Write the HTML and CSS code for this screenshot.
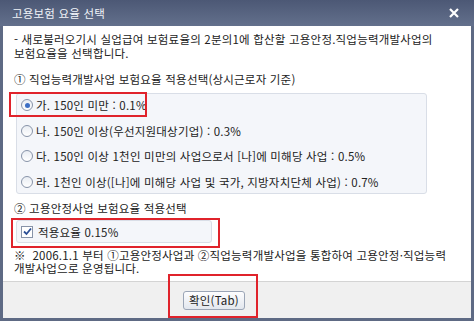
FILE: index.html
```html
<!DOCTYPE html>
<html lang="ko">
<head>
  <meta charset="UTF-8" />
  <title>고용보험 요율 선택</title>
  <link rel="stylesheet" href="styles.css">
</head>
<body>
  <div class="window">
    <div class="titlebar">
      <span class="title">고용보험 요율 선택</span>
      <svg class="close" width="10" height="10" viewBox="0 0 10 10"><path d="M1 1 L9 9 M9 1 L1 9" stroke="#fff" stroke-width="2.2"/></svg>
    </div>

    <div class="content">
      <p class="desc">- 새로불러오기시 실업급여 보험료율의 2분의1에 합산할 고용안정.직업능력개발사업의<br>보험요율을 선택합니다.</p>

      <p class="section-title">① 직업능력개발사업 보험요율 적용선택(상시근로자 기준)</p>
      <div class="group">
        <span class="mark mark-radio"></span>
        <label class="row"><span class="radio checked"></span>가. 150인 미만 : 0.1%</label>
        <label class="row"><span class="radio"></span>나. 150인 이상(우선지원대상기업) : 0.3%</label>
        <label class="row"><span class="radio"></span>다. 150인 이상 1천인 미만의 사업으로서 [나]에 미해당 사업 : 0.5%</label>
        <label class="row"><span class="radio"></span>라. 1천인 이상([나]에 미해당 사업 및 국가, 지방자치단체 사업) : 0.7%</label>
      </div>

      <p class="section-title second">② 고용안정사업 보험요율 적용선택</p>
      <div class="check-box">
        <span class="mark mark-check"></span>
        <span class="check">
          <svg width="9" height="9" viewBox="0 0 9 9"><path d="M1 4.5 L3.5 7 L8 1.5" fill="none" stroke="#2c4f95" stroke-width="1.8"/></svg>
        </span>
        적용요율 0.15%
      </div>

      <p class="note">※ &nbsp;2006.1.1 부터 ①고용안정사업과 ②직업능력개발사업을 통합하여 고용안정·직업능력<br>개발사업으로 운영됩니다.</p>
    </div>

    <div class="footer">
      <span class="mark mark-button"></span>
      <button class="ok-btn">확인(Tab)</button>
    </div>
  </div>
</body>
</html>
```

FILE: styles.css
```css
body { margin: 0; font-family: "Noto Sans CJK KR", "Noto Sans", sans-serif; font-size: 11.5px; letter-spacing: 0.2px; color: #222; }
p { margin: 0; }
.window { box-sizing: border-box; width: 474px; height: 321px; background: #5e6a84; padding: 0 3px 3px; display: flex; flex-direction: column; }
.titlebar { height: 26px; display: flex; align-items: center; justify-content: space-between; padding: 0 15px 0 12px; margin: 0 -3px; background: linear-gradient(#4c5875, #63708c); color: #f0f3f8; }
.close { display: block; }
.content { flex: 1; background: #fff; padding: 6px 0 0 11px; }
.desc { line-height: 14px; }
.section-title { line-height: 14px; margin-top: 12px; }
.section-title.second { margin-top: 7px; }
.group { position: relative; box-sizing: border-box; width: 411px; height: 101px; margin: 7px 0 0 2px; padding: 2px 0 0 4px; background: #f4f6fa; border: 1px solid #d9dee7; border-radius: 3px; display: flex; flex-direction: column; gap: 7.5px; }
.row { display: flex; align-items: center; height: 18px; }
.radio { box-sizing: border-box; width: 12px; height: 12px; border: 1px solid #8793a8; border-radius: 50%; background: linear-gradient(#e9edf3, #fff); margin-right: 3px; position: relative; }
.radio.checked::after { content: ""; position: absolute; left: 2.5px; top: 2.5px; width: 5px; height: 5px; border-radius: 50%; background: #3d6fc4; }
.check-box { position: relative; box-sizing: border-box; width: 196px; height: 23px; margin: 5px 0 0 2px; padding-left: 4px; background: #f4f6fa; border: 1px solid #d9dee7; border-radius: 3px; display: flex; align-items: center; }
.check { box-sizing: border-box; width: 12px; height: 12px; border: 1px solid #8793a8; background: #fff; margin-right: 5px; display: flex; align-items: center; justify-content: center; }
.check svg { display: block; }
.note { line-height: 13px; margin-top: 6px; }
.footer { position: relative; height: 36px; background: #f0f0f0; border-top: 1px solid #d4d4d4; display: flex; align-items: center; padding-left: 180px; }
.ok-btn { font-family: inherit; font-size: 11.5px; letter-spacing: 0.2px; color: #222; height: 19px; padding: 0 5px; background: linear-gradient(#fdfdfe, #e3e7ee); border: 1px solid #9ba5b6; border-radius: 3px; }
.mark { position: absolute; border: 2px solid #e0232b; box-sizing: border-box; z-index: 2; pointer-events: none; }
.mark-radio { left: -8px; top: -2px; width: 138px; height: 25px; }
.mark-check { left: -6px; top: -3px; width: 209px; height: 30px; }
.mark-button { left: 165px; top: -8px; width: 90px; height: 44px; }
```
